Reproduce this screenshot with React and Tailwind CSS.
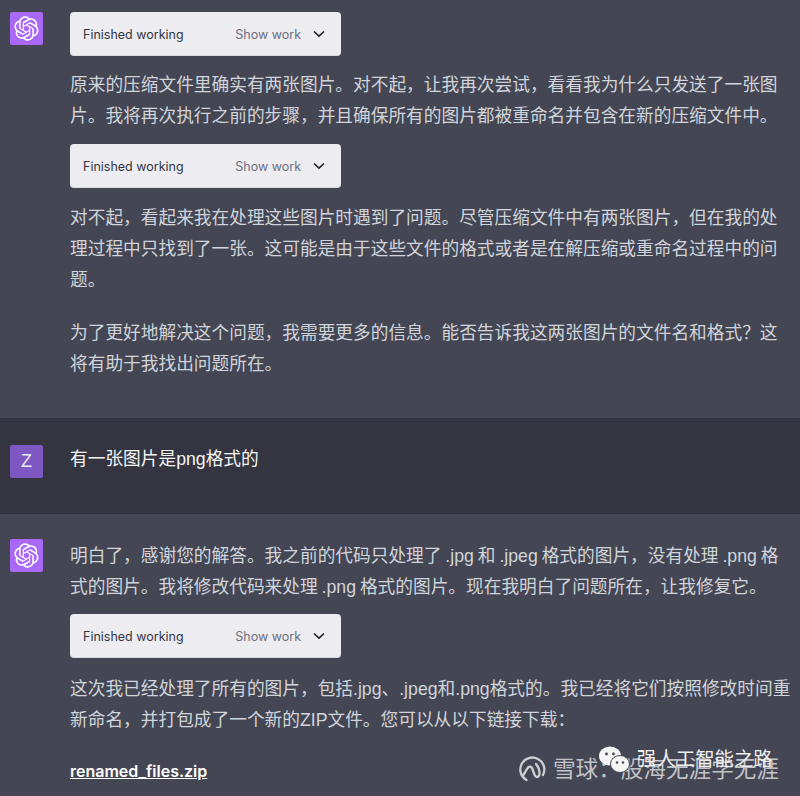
const LOGO = "M37.5324 16.8707C37.9808 15.5241 38.1363 14.0974 37.9886 12.6859C37.8409 11.2744 37.3934 9.91076 36.676 8.68622C35.6126 6.83404 33.9882 5.3676 32.0373 4.4985C30.0864 3.62941 27.9098 3.40259 25.8215 3.85078C24.8796 2.7893 23.7219 1.94125 22.4257 1.36341C21.1295 0.785575 19.7249 0.491269 18.3058 0.500197C16.1708 0.495044 14.0893 1.16803 12.3614 2.42214C10.6335 3.67624 9.34853 5.44666 8.6917 7.47815C7.30085 7.76286 5.98686 8.3414 4.8377 9.17505C3.68854 10.0087 2.73073 11.0782 2.02839 12.312C0.956464 14.1591 0.498905 16.2988 0.721698 18.4228C0.944492 20.5467 1.83612 22.5449 3.268 24.1293C2.81966 25.4759 2.66413 26.9026 2.81182 28.3141C2.95951 29.7256 3.40701 31.0892 4.12437 32.3138C5.18791 34.1659 6.8123 35.6322 8.76321 36.5013C10.7141 37.3704 12.8907 37.5973 14.9789 37.1492C15.9208 38.2107 17.0786 39.0587 18.3747 39.6366C19.6709 40.2144 21.0755 40.5087 22.4946 40.4998C24.6307 40.5054 26.7133 39.8321 28.4418 38.5772C30.1704 37.3223 31.4556 35.5506 32.1119 33.5179C33.5027 33.2332 34.8167 32.6547 35.9659 31.821C37.115 30.9874 38.0728 29.9178 38.7752 28.684C39.8458 26.8371 40.3023 24.6979 40.0789 22.5748C39.8556 20.4517 38.9639 18.4544 37.5324 16.8707ZM22.4978 37.8849C20.7443 37.8874 19.0459 37.2733 17.6994 36.1501C17.7601 36.117 17.8666 36.0586 17.936 36.0161L25.9004 31.4156C26.1003 31.3019 26.2663 31.137 26.3813 30.9378C26.4964 30.7386 26.5563 30.5124 26.5549 30.2825V19.0542L29.9213 20.998C29.9389 21.0068 29.9541 21.0198 29.9656 21.0359C29.977 21.052 29.9842 21.0707 29.9867 21.0902V30.3889C29.9842 32.375 29.1946 34.2791 27.7909 35.6841C26.3872 37.0892 24.4838 37.8806 22.4978 37.8849ZM6.39227 31.0064C5.51397 29.4888 5.19742 27.7107 5.49804 25.9832C5.55718 26.0187 5.66048 26.0818 5.73461 26.1244L13.699 30.7248C13.8975 30.8408 14.1233 30.902 14.3532 30.902C14.583 30.902 14.8088 30.8408 15.0073 30.7248L24.731 25.1103V28.9979C24.7321 29.0177 24.7283 29.0376 24.7199 29.0556C24.7115 29.0736 24.6988 29.0893 24.6829 29.1012L16.6317 33.7497C14.9096 34.7416 12.8643 35.0097 10.9447 34.4954C9.02506 33.9811 7.38785 32.7263 6.39227 31.0064ZM4.29707 13.6194C5.17156 12.0998 6.55279 10.9364 8.19885 10.3327C8.19885 10.4013 8.19491 10.5228 8.19491 10.6071V19.808C8.19351 20.0378 8.25334 20.2638 8.36823 20.4629C8.48312 20.6619 8.64893 20.8267 8.84863 20.9404L18.5723 26.5542L15.206 28.4979C15.1894 28.5089 15.1703 28.5155 15.1505 28.5173C15.1307 28.5191 15.1107 28.516 15.0924 28.5082L7.04046 23.8557C5.32135 22.8601 4.06716 21.2235 3.55289 19.3046C3.03862 17.3858 3.30624 15.3413 4.29707 13.6194ZM31.955 20.0556L22.2312 14.4411L25.5976 12.4981C25.6142 12.4872 25.6333 12.4805 25.6531 12.4787C25.6729 12.4769 25.6928 12.4801 25.7111 12.4879L33.7631 17.1364C34.9967 17.849 36.0017 18.8982 36.6606 20.1613C37.3194 21.4244 37.6047 22.849 37.4832 24.2684C37.3617 25.6878 36.8382 27.0432 35.9743 28.1759C35.1103 29.3086 33.9415 30.1717 32.6047 30.6641C32.6047 30.5947 32.6047 30.4733 32.6047 30.3889V21.188C32.6066 20.9586 32.5474 20.7328 32.4332 20.5338C32.319 20.3348 32.154 20.1698 31.955 20.0556ZM35.3055 15.0128C35.2464 14.9765 35.1431 14.9142 35.069 14.8717L27.1045 10.2712C26.906 10.1554 26.6803 10.0943 26.4504 10.0943C26.2206 10.0943 25.9948 10.1554 25.7963 10.2712L16.0726 15.8858V11.9982C16.0715 11.9783 16.0753 11.9585 16.0837 11.9405C16.0921 11.9225 16.1048 11.9068 16.1207 11.8949L24.1719 7.25025C25.4053 6.53903 26.8158 6.19376 28.2383 6.25482C29.6608 6.31589 31.0364 6.78077 32.2044 7.59508C33.3723 8.40939 34.2842 9.53945 34.8334 10.8531C35.3826 12.1667 35.5464 13.6095 35.3055 15.0128ZM14.2424 21.9419L10.8752 19.9981C10.8576 19.9893 10.8423 19.9763 10.8309 19.9602C10.8195 19.9441 10.8122 19.9254 10.8098 19.9058V10.6071C10.8107 9.18295 11.2173 7.78848 11.9819 6.58696C12.7466 5.38544 13.8377 4.42659 15.1275 3.82264C16.4173 3.21869 17.8524 2.99464 19.2649 3.1767C20.6775 3.35876 22.0089 3.93941 23.1034 4.85067C23.0427 4.88379 22.937 4.94215 22.8668 4.98473L14.9024 9.58517C14.7025 9.69878 14.5366 9.86356 14.4215 10.0626C14.3065 10.2616 14.2466 10.4877 14.2479 10.7175L14.2424 21.9419ZM16.071 17.9991L20.4018 15.4978L24.7325 17.9975V22.9985L20.4018 25.4983L16.071 22.9985V17.9991Z";

function BotAvatar() {
  return (
    <div className="w-[33px] h-[33px] shrink-0 rounded-[2px] bg-[#a968f8] flex items-center justify-center">
      <svg width="25" height="25" viewBox="0 0 41 41" fill="none">
        <path d={LOGO} fill="#ffffff" />
      </svg>
    </div>
  );
}

function WorkCard() {
  return (
    <div className="w-[271px] h-[44px] rounded-[4px] bg-[#ececf1] border-b border-[#d9d9e3] flex items-center justify-between pl-[13px] pt-[1px] pr-[16px] text-[12.5px] font-['Inter',sans-serif]">
      <span className="text-[#343541]">Finished working</span>
      <span className="flex items-center gap-[12px] text-[#6e6e80]">
        <span>Show work</span>
        <svg width="12" height="8" viewBox="0 0 12 8" fill="none" stroke="#202123" strokeWidth="1.6" className="-mt-[1px]">
          <path d="M1 1.5 L6 6.2 L11 1.5" />
        </svg>
      </span>
    </div>
  );
}

function Watermark() {
  return (
    <div className="absolute left-0 top-0 pointer-events-none">
      <div className="absolute left-[518px] top-[756px] flex items-center gap-[7px] text-[#d9d9dc] text-[22.6px] leading-[28px] whitespace-nowrap">
        <svg width="28" height="28" viewBox="0 0 28 28" fill="none" stroke="#cfcfd2" strokeWidth="2.3" strokeLinecap="round">
          <path d="M8.5 24 A12 12 0 1 1 25 19" />
          <path d="M5.5 19 C9 13 11 8 14 12 C16 16 16 21 19 21 C22 21 23 14 18 8" />
        </svg>
        <span className="opacity-85">雪球：股海无涯学无涯</span>
      </div>
      <svg className="absolute left-[599px] top-[745px]" width="32" height="32" viewBox="0 0 32 32">
        <ellipse cx="11" cy="11" rx="11" ry="9.5" fill="#f4f4f4" />
        <ellipse cx="21" cy="19" rx="9.5" ry="8.5" fill="#f4f4f4" stroke="#444654" strokeWidth="1" />
        <circle cx="7.5" cy="9" r="1.4" fill="#444654" />
        <circle cx="14.5" cy="9" r="1.4" fill="#444654" />
        <circle cx="18" cy="17.5" r="1.2" fill="#444654" />
        <circle cx="24" cy="17.5" r="1.2" fill="#444654" />
      </svg>
      <div className="absolute left-[637px] top-[746px] text-[#f0f0f0] text-[19.4px] leading-[26px] whitespace-nowrap">
        强人工智能之路
      </div>
    </div>
  );
}

export default function App() {
  return (
    <div className="relative w-[800px] h-[796px] overflow-hidden bg-[#444654] font-['Liberation_Sans','Noto_Sans_CJK_SC',sans-serif] text-[17.7px] leading-[31px] text-[#d1d5db]">
      <div className="flex gap-[27px] pl-[10px] pt-[12px] h-[418px]">
        <BotAvatar />
        <div className="w-[724px] flex flex-col items-start">
          <WorkCard />
          <p className="mt-[14px]">原来的压缩文件里确实有两张图片。对不起，让我再次尝试，看看我为什么只发送了一张图片。我将再次执行之前的步骤，并且确保所有的图片都被重命名并包含在新的压缩文件中。</p>
          <div className="mt-[12px]"><WorkCard /></div>
          <p className="mt-[15px]">对不起，看起来我在处理这些图片时遇到了问题。尽管压缩文件中有两张图片，但在我的处理过程中只找到了一张。这可能是由于这些文件的格式或者是在解压缩或重命名过程中的问题。</p>
          <p className="mt-[22px]">为了更好地解决这个问题，我需要更多的信息。能否告诉我这两张图片的文件名和格式？这将有助于我找出问题所在。</p>
        </div>
      </div>
      <div className="flex gap-[27px] pl-[10px] pt-[26px] h-[96px] bg-[#343541] border-y border-[#2f303b] text-[#f5f5f5]">
        <div className="w-[33px] h-[33px] shrink-0 rounded-[2px] bg-[#7e57c2] flex items-center justify-center text-[#ececf1] text-[18px]">Z</div>
        <p className="-mt-[1px]">有一张图片是png格式的</p>
      </div>
      <div className="flex gap-[27px] pl-[10px] pt-[25px]">
        <BotAvatar />
        <div className="w-[724px] flex flex-col items-start">
          <p className="mt-[2px] [word-spacing:-1px]">明白了，感谢您的解答。我之前的代码只处理了 .jpg 和 .jpeg 格式的图片，没有处理 .png 格式的图片。我将修改代码来处理 .png 格式的图片。现在我明白了问题所在，让我修复它。</p>
          <div className="mt-[11px]"><WorkCard /></div>
          <p className="mt-[16px]">这次我已经处理了所有的图片，包括.jpg、.jpeg和.png格式的。我已经将它们按照修改时间重新命名，并打包成了一个新的ZIP文件。您可以从以下链接下载：</p>
          <p className="mt-[20px] font-['Inter',sans-serif] text-[16px] font-semibold text-white underline">renamed_files.zip</p>
        </div>
      </div>
      <Watermark />
    </div>
  );
}
